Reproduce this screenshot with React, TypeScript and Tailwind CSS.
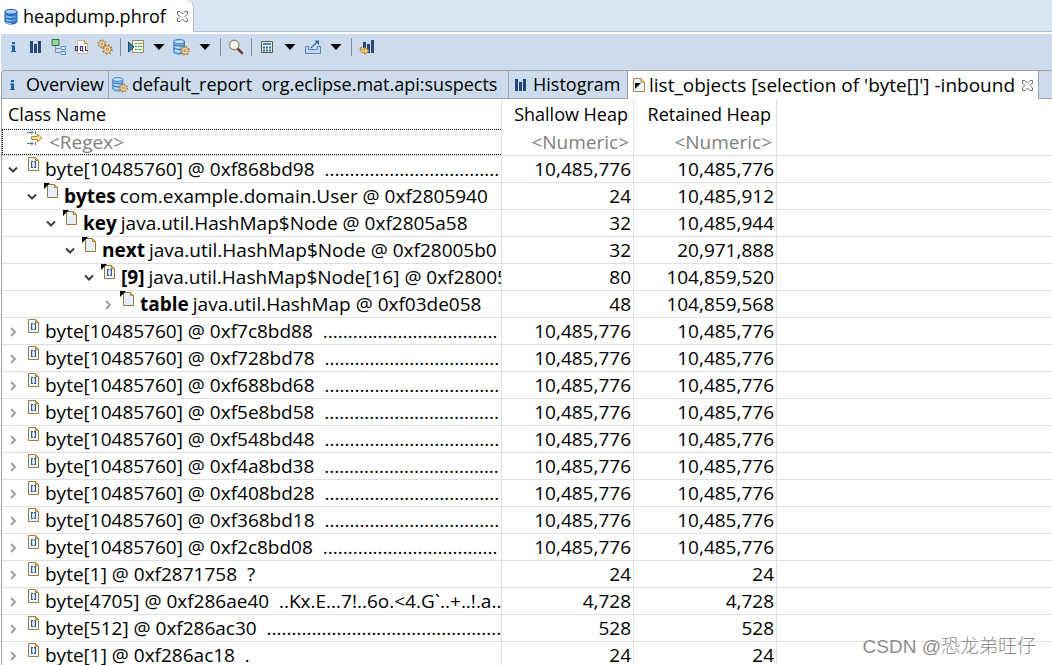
import React from "react";

type IconProps = { className?: string };

const Database = ({ className = "h-4 w-4" }: IconProps) => (
  <svg viewBox="0 0 16 16" className={className} aria-hidden="true">
    <path d="M2 3v10c0 1.4 2.6 2.6 6 2.6s6-1.200 6-2.600V3z" fill="#5b9ae6" stroke="#1d5ca8" />
    <path d="M2.500 5.500c1 2 10 2 11 0M2.500 9c1 2 10 2 11 0M2.500 12.300c1 2 10 2 11 0" fill="none" stroke="#1d5ca8" />
    <path d="M3.500 7.600c1 .9 3 1.200 4.500 1.200M3.500 11c1 .9 3 1.200 4.500 1.200M3.500 14c1 .7 3 1 4.500 1" fill="none" stroke="#b9dcff" />
    <ellipse cx="8" cy="3.200" rx="6" ry="2.400" fill="#a9d1fb" stroke="#1d5ca8" />
  </svg>
);

const Gear = ({ x, y, s }: { x: number; y: number; s: number }) => (
  <g transform={`translate(${x} ${y}) scale(${s})`}>
    <circle r="4.800" fill="none" stroke="#a5762c" strokeWidth="1.800" strokeDasharray="1.900 1.870" />
    <circle r="3.800" fill="#fae3ac" stroke="#b58a3e" strokeWidth=".9" />
    <circle r="1.300" fill="#fff" stroke="#8a5a24" strokeWidth=".9" />
  </g>
);

const DatabaseGear = ({ className = "h-4 w-4" }: IconProps) => (
  <svg viewBox="0 0 16 16" className={`${className} shrink-0`} aria-hidden="true">
    <path d="M.8 2.500v9.500c0 1.200 2.200 2 5 2s5-.8 5-2V2.500z" fill="#8fc0f0" stroke="#3b7fc4" />
    <path d="M1.200 5.500c1 1.500 8.500 1.500 9.300 0M1.200 8.700c1 1.500 8.500 1.500 9.300 0" fill="none" stroke="#2f72b8" />
    <path d="M2 7.200c1 .6 2.500.8 4 .8M2 10.600c1 .6 2.500.8 4 .8" fill="none" stroke="#dceeff" />
    <ellipse cx="5.800" cy="2.500" rx="5" ry="1.900" fill="#c9e4fc" stroke="#3b7fc4" />
    <Gear x={11.3} y={11} s={0.8} />
  </svg>
);

const Info = ({ className = "h-4 w-4" }: IconProps) => (
  <svg viewBox="0 0 16 16" className={`${className} shrink-0`} aria-hidden="true">
    <path d="M7 3h3v2.200H7zM6 6.500h4v5.500h1V13H6v-1h1V7.500H6z" fill="#1b62a5" />
  </svg>
);

const Bars = ({ className = "h-4 w-4" }: IconProps) => (
  <svg viewBox="0 0 16 16" className={`${className} shrink-0`} aria-hidden="true">
    <path d="M2 2h3v12H2zM6 5h3v9H6zM10 2h3v12h-3z" fill="#24477c" />
  </svg>
);

const Tree = () => (
  <svg viewBox="0 0 16 16" className="h-4 w-4" aria-hidden="true">
    <path d="M4.500 7v6.500H9M4.500 9.500H9" fill="none" stroke="#7d8da6" />
    <path d="M1 .500h7v6H1z" fill="#9ed49c" stroke="#1f7a3d" />
    <path d="M10 7.500h4.500v3H10zM10 12.500h4.500v3H10z" fill="#dcebff" stroke="#5d8fd0" />
  </svg>
);

const Oql = () => (
  <svg viewBox="0 0 16 16" className="h-4 w-4" aria-hidden="true">
    <path d="M3.500 1.500h7l3 3v10h-10z" fill="#fbfbfd" stroke="#c9b88c" />
    <path d="M10.500 1.500v3h3" fill="#f0d68c" stroke="#b9862c" />
    <path d="M1.500 7.500h2v4h-2zM6.500 7.500h2v4h-2zM8 11l1.500 1.500M11.500 7v4.500H14" fill="none" stroke="#4a3c7c" strokeWidth="1.200" />
  </svg>
);

const Gears = () => (
  <svg viewBox="0 0 16 16" className="h-4 w-4" aria-hidden="true">
    <Gear x={4.8} y={4.8} s={0.75} />
    <Gear x={10.4} y={10.4} s={0.92} />
  </svg>
);

const RunReport = () => (
  <svg viewBox="0 0 18 16" className="h-4 w-[18px]" aria-hidden="true">
    <path d="M5.500 1.500h11v12h-11z" fill="#fdfef6" stroke="#9a8a52" />
    <path d="M8 4.500h2M8 7.500h2M8 10.500h2" stroke="#2d8a4a" />
    <path d="M11 4.500h4M11 7.500h4M11 10.500h4" stroke="#54a870" />
    <path d="M1.500 3v10L7 8z" fill="#3f7ea8" stroke="#164f7c" />
  </svg>
);

const Magnifier = () => (
  <svg viewBox="0 0 16 16" className="h-4 w-4" aria-hidden="true">
    <path d="M10 10l4 4" stroke="#7c3f35" strokeWidth="2.600" strokeLinecap="round" />
    <circle cx="6.200" cy="6" r="4.700" fill="#fbfaf0" stroke="#8f8c7c" strokeWidth="1.400" />
  </svg>
);

const Calculator = () => (
  <svg viewBox="0 0 16 16" className="h-4 w-4" aria-hidden="true">
    <path d="M2.500 2.500h11v11h-11z" fill="#e9f2f8" stroke="#5c5a3c" />
    <path d="M4 4h8v2H4z" fill="#4c86b0" />
    <path d="M4 8.500h8M4 11.500h8" stroke="#2f6c98" strokeWidth="2" strokeDasharray="2 1" />
  </svg>
);

const Export = () => (
  <svg viewBox="0 0 16 16" className="h-4 w-4" aria-hidden="true">
    <path d="M.500 7.500h3v3h9v-3h3v7H.500z" fill="#c3d8ee" stroke="#5684b8" />
    <path d="M6 9l6-6" stroke="#1d5c92" strokeWidth="1.300" strokeDasharray="2 .5" />
    <path d="M9.500 1.500H14V6z" fill="#1d6c9c" />
  </svg>
);

const BarsBack = () => (
  <svg viewBox="0 0 16 16" className="h-4 w-4" aria-hidden="true">
    <path d="M4 3h3v6H4zM8 5h3v9H8zM12 1h3v13h-3z" fill="#24477c" />
    <path d="M2.500 7.500c-1.500 3 .5 4 3 3.500V8.500L10 12l-4.500 3.500v-2C2 14-.5 11.500 2.500 7.500z" fill="#f7d570" stroke="#b8801c" />
  </svg>
);

const Caret = () => (
  <svg viewBox="0 0 12 6" className="h-1.5 w-3" aria-hidden="true">
    <path d="M.500 0h11L6 6z" fill="#000" />
  </svg>
);

const Close = () => (
  <svg viewBox="0 0 11 11" className="h-[11px] w-[11px]" aria-hidden="true">
    <path
      d="M.500 .500h2.500l2.500 2.500L8 .500h2.500V3L8 5.500 10.500 8v2.500H8L5.500 8 3 10.500H.500V8L3 5.500.500 3z"
      fill="#fff"
      stroke="#6f6f6f"
    />
  </svg>
);

const ListObjects = () => (
  <svg viewBox="0 0 12 14" className="h-3.5 w-3 shrink-0" aria-hidden="true">
    <path d="M.500 .500h7.500l3.500 3.500v9.500H.500z" fill="#f1f5fc" stroke="#a9843c" />
    <path d="M8 .500v3.500h3.500" fill="#efcf85" stroke="#a9843c" />
    <path d="M2 5h6L2 11z" fill="#000" />
  </svg>
);

const FilterArrows = () => (
  <svg viewBox="0 0 16 16" className="h-4 w-4" aria-hidden="true">
    <path d="M0 2.500h6M0 13.500h6M4 .500l2 2-2 2M4 11.500l2 2-2 2" fill="none" stroke="#54758f" />
    <path d="M8.500 1v3M8.500 12v3" stroke="#54758f" />
    <path d="M4.500 6.500h6V4l4.500 4-4.500 4V9.500h-6z" fill="#fbe3a0" stroke="#b8862c" />
  </svg>
);

const ObjectIcon = ({ array, inbound }: { array: boolean; inbound: boolean }) => (
  <svg viewBox="0 0 16 16" className="h-4 w-4 shrink-0 self-start" aria-hidden="true">
    <path d="M3.500 1.500h7l3 3v10h-10z" fill={array ? "#f7f9fd" : "#e9eff9"} stroke="#96783c" />
    <path d="M10.500 1.500v3h3z" fill="#e9bf62" stroke="#b8862c" />
    {array && (
      <path d="M8 5.600H6.600v5.800H8M9 5.600h1.400v5.800H9" fill="none" stroke="#22609f" strokeWidth="1.200" />
    )}
    {inbound && <path d="M0 0h6L0 6z" fill="#000" />}
  </svg>
);

const Chevron = ({ open }: { open: boolean }) => (
  <svg viewBox="0 0 14 14" className="h-3.5 w-3.5" aria-hidden="true">
    <path
      d={open ? "M3 4.500l4 4 4-4" : "M5 3l4 4-4 4"}
      fill="none"
      stroke={open ? "#404040" : "#a0a0a0"}
      strokeWidth="2"
    />
  </svg>
);

const Tool = ({ label, children }: { label: string; children: React.ReactNode }) => (
  <button aria-label={label} className="flex h-6 w-[23px] items-center justify-center">
    {children}
  </button>
);

const ToolMenu = ({ label }: { label: string }) => (
  <button aria-label={label} className="flex h-6 w-[23px] items-center justify-center">
    <Caret />
  </button>
);

const Separator = () => (
  <div className="flex w-2 justify-center">
    <div className="h-[18px] w-px bg-[#868e97]" />
  </div>
);

type Row = {
  level: number;
  open?: boolean;
  array?: boolean;
  field?: string;
  text: string;
  shallow: string;
  retained: string;
};

const dots = "...................................";
const big = (address: string, open = false): Row => ({
  level: 0,
  open,
  array: true,
  text: `byte[10485760] @ ${address}  ${dots}`,
  shallow: "10,485,776",
  retained: "10,485,776",
});

const rows: Row[] = [
  big("0xf868bd98", true),
  { level: 1, open: true, field: "bytes", text: "com.example.domain.User @ 0xf2805940", shallow: "24", retained: "10,485,912" },
  { level: 2, open: true, field: "key", text: "java.util.HashMap$Node @ 0xf2805a58", shallow: "32", retained: "10,485,944" },
  { level: 3, open: true, field: "next", text: "java.util.HashMap$Node @ 0xf28005b0", shallow: "32", retained: "20,971,888" },
  { level: 4, open: true, array: true, field: "[9]", text: "java.util.HashMap$Node[16] @ 0xf28005", shallow: "80", retained: "104,859,520" },
  { level: 5, field: "table", text: "java.util.HashMap @ 0xf03de058", shallow: "48", retained: "104,859,568" },
  big("0xf7c8bd88"),
  big("0xf728bd78"),
  big("0xf688bd68"),
  big("0xf5e8bd58"),
  big("0xf548bd48"),
  big("0xf4a8bd38"),
  big("0xf408bd28"),
  big("0xf368bd18"),
  big("0xf2c8bd08"),
  { level: 0, array: true, text: "byte[1] @ 0xf2871758  ?", shallow: "24", retained: "24" },
  { level: 0, array: true, text: "byte[4705] @ 0xf286ae40  ..Kx.E...7!..6o.<4.G`..+..!.a....E", shallow: "4,728", retained: "4,728" },
  { level: 0, array: true, text: `byte[512] @ 0xf286ac30  ${dots}${dots.slice(0, 14)}`, shallow: "528", retained: "528" },
  { level: 0, array: true, text: "byte[1] @ 0xf286ac18  .", shallow: "24", retained: "24" },
];

const TreeRow = ({ row }: { row: Row }) => (
  <tr>
    <td className="h-[27px] overflow-hidden border-r p-0">
      <div className="flex h-[26px] items-center overflow-hidden whitespace-pre" style={{ paddingLeft: 4 + row.level * 19 }}>
        <button aria-label={row.open ? "Collapse" : "Expand"} className="mt-0.5 mr-[5px] shrink-0">
          <Chevron open={!!row.open} />
        </button>
        <ObjectIcon array={!!row.array} inbound={row.level > 0} />
        <span className="ml-1">
          {row.field && <b className="mr-1">{row.field}</b>}
          {row.text}
        </span>
      </div>
    </td>
    <td className="border-r p-0 pr-0.5 text-right">{row.shallow}</td>
    <td className="border-r p-0 pr-0.5 text-right">{row.retained}</td>
    <td className="p-0" />
  </tr>
);

const inactiveTab =
  "flex shrink-0 items-center overflow-hidden border-r border-b border-[#a0a0a0] text-[18px] whitespace-pre";

export default function App() {
  return (
    <div className="relative flex h-screen flex-col overflow-hidden bg-white font-['Open_Sans','Noto_Sans',sans-serif] text-[19px] leading-[25px] text-black">
      <header className="flex h-8 shrink-0 bg-[#d8e5f3]">
        <div className="flex w-[194px] items-center rounded-tr-lg border-r border-[#b4bccf] bg-white pl-[3px]">
          <Database className="h-[17px] w-4 shrink-0" />
          <span className="ml-1 flex-1 text-[18px]">heapdump.phrof</span>
          <button aria-label="Close heapdump.phrof" className="mr-[5px]">
            <Close />
          </button>
        </div>
        <div className="flex-1 border-b border-[#b4bccf]" />
      </header>

      <div className="mt-0.5 ml-px flex h-9 shrink-0 bg-[#cddcec]">
        <div role="toolbar" aria-label="Heap dump tools" className="flex h-[26px] items-center">
          <Tool label="Overview"><Info /></Tool>
          <Tool label="Histogram"><Bars /></Tool>
          <Tool label="Dominator tree"><Tree /></Tool>
          <Tool label="OQL"><Oql /></Tool>
          <Tool label="Thread overview"><Gears /></Tool>
          <Separator />
          <Tool label="Run expert system test"><RunReport /></Tool>
          <ToolMenu label="Expert system tests" />
          <Tool label="Query browser"><DatabaseGear className="h-[17px] w-[17px]" /></Tool>
          <ToolMenu label="Queries" />
          <Separator />
          <Tool label="Find object"><Magnifier /></Tool>
          <Separator />
          <Tool label="Calculate retained size"><Calculator /></Tool>
          <ToolMenu label="Retained size options" />
          <Tool label="Export"><Export /></Tool>
          <ToolMenu label="Export options" />
          <Separator />
          <Tool label="Compare histogram"><BarsBack /></Tool>
        </div>
      </div>

      <nav role="tablist" className="ml-px flex h-[29px] shrink-0 rounded-tl border-t border-l border-[#a0a0a0] bg-[#cddcec]">
        <button role="tab" className={`${inactiveTab} w-[107px] pl-0.5`}>
          <Info />
          <span className="ml-1.5">Overview</span>
        </button>
        <button role="tab" className={`${inactiveTab} w-[400px] pl-[3px]`}>
          <DatabaseGear />
          <span className="ml-1">default_report  org.eclipse.mat.api:suspects</span>
        </button>
        <button role="tab" className={`${inactiveTab} w-[119px] pl-1`}>
          <Bars />
          <span className="ml-1">Histogram</span>
        </button>
        <div role="tab" aria-selected="true" className="flex w-[411px] shrink-0 items-center border-r border-[#a0a0a0] bg-white pl-[5px] whitespace-pre">
          <ListObjects />
          <span className="ml-1 flex-1">list_objects [selection of 'byte[]'] -inbound</span>
          <button aria-label="Close list_objects" className="mr-[5px]">
            <Close />
          </button>
        </div>
        <div className="flex-1 border-b border-[#a0a0a0]" />
      </nav>

      <main className="ml-px flex-1 overflow-hidden border-l border-[#a0a0a0]">
        <table className="w-full table-fixed border-separate border-spacing-0 [&_td]:border-b [&_td]:border-[#e0e0e0]">
          <colgroup>
            <col className="w-[500px]" />
            <col className="w-[132px]" />
            <col className="w-[143px]" />
            <col />
          </colgroup>
          <thead className="text-[18px]">
            <tr>
              <th className="h-[30px] border-r border-[#e0e0e0] p-0 pl-1.5 text-left font-normal">Class Name</th>
              <th className="border-r border-[#e0e0e0] p-0 pr-[5px] text-right font-normal">Shallow Heap</th>
              <th className="border-r border-[#e0e0e0] p-0 pr-[5px] text-right font-normal">Retained Heap</th>
              <th className="p-0" />
            </tr>
          </thead>
          <tbody>
            <tr>
              <td className="h-[27px] border-r p-0">
                <div className="flex h-[26px] items-center border-y border-l border-dotted border-black pl-6">
                  <span className="self-start"><FilterArrows /></span>
                  <input aria-label="Filter class name" placeholder="<Regex>" className="ml-1.5 h-6 min-w-0 flex-1 placeholder:text-[#808080]" />
                </div>
              </td>
              <td className="border-r p-0">
                <input aria-label="Filter shallow heap" placeholder="<Numeric>" className="block h-[26px] w-full pr-1 text-right placeholder:text-[#808080]" />
              </td>
              <td className="border-r p-0">
                <input aria-label="Filter retained heap" placeholder="<Numeric>" className="block h-[26px] w-full pr-1 text-right placeholder:text-[#808080]" />
              </td>
              <td className="p-0" />
            </tr>
            {rows.map((row) => (
              <TreeRow key={row.text} row={row} />
            ))}
          </tbody>
        </table>
      </main>

      <div className="absolute right-4 bottom-1.5 font-['Liberation_Sans','Noto_Sans_CJK_SC',sans-serif] text-[19px] font-light text-[#8c8c8c]">
        CSDN @恐龙弟旺仔
      </div>
    </div>
  );
}
